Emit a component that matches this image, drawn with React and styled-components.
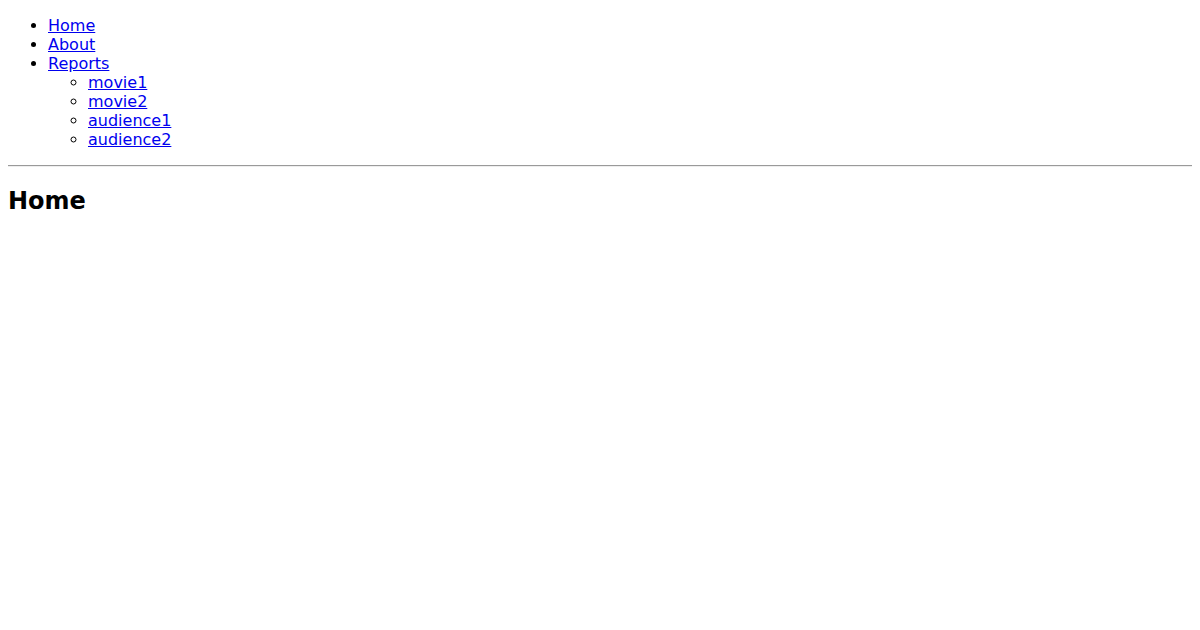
import React from "react";
import styled, { createGlobalStyle } from "styled-components";

const GlobalStyle = createGlobalStyle`
  body {
    margin: 0 8px 8px;
    font-family: "DejaVu Sans", sans-serif;
    font-size: 16px;
    color: #000;
    background: #fff;
  }
`;

const NavList = styled.ul`
  margin: ${(props) => (props.nested ? "0" : "16px 0")};
  padding-left: 40px;
  list-style: ${(props) => (props.nested ? "circle" : "disc")};
`;

const Item = styled.li`
  line-height: normal;
`;

const NavLink = styled.a`
  color: #0000ee;
  text-decoration: underline;
`;

const Divider = styled.hr`
  margin: 8px 0;
  border: 0;
  border-top: 1px solid #9a9a9a;
  border-bottom: 1px solid #eeeeee;
`;

const Title = styled.h2`
  font-size: 24px;
  font-weight: bold;
  margin: 19.92px 0;
`;

const reports = ["movie1", "movie2", "audience1", "audience2"];

export default function App() {
  return (
    <>
      <GlobalStyle />
      <NavList>
        <Item>
          <NavLink href="#/">Home</NavLink>
        </Item>
        <Item>
          <NavLink href="#/about">About</NavLink>
        </Item>
        <Item>
          <NavLink href="#/reports">Reports</NavLink>
          <NavList nested>
            {reports.map((r) => (
              <Item key={r}>
                <NavLink href={`#/reports/${r}`}>{r}</NavLink>
              </Item>
            ))}
          </NavList>
        </Item>
      </NavList>
      <Divider />
      <Title>Home</Title>
    </>
  );
}
